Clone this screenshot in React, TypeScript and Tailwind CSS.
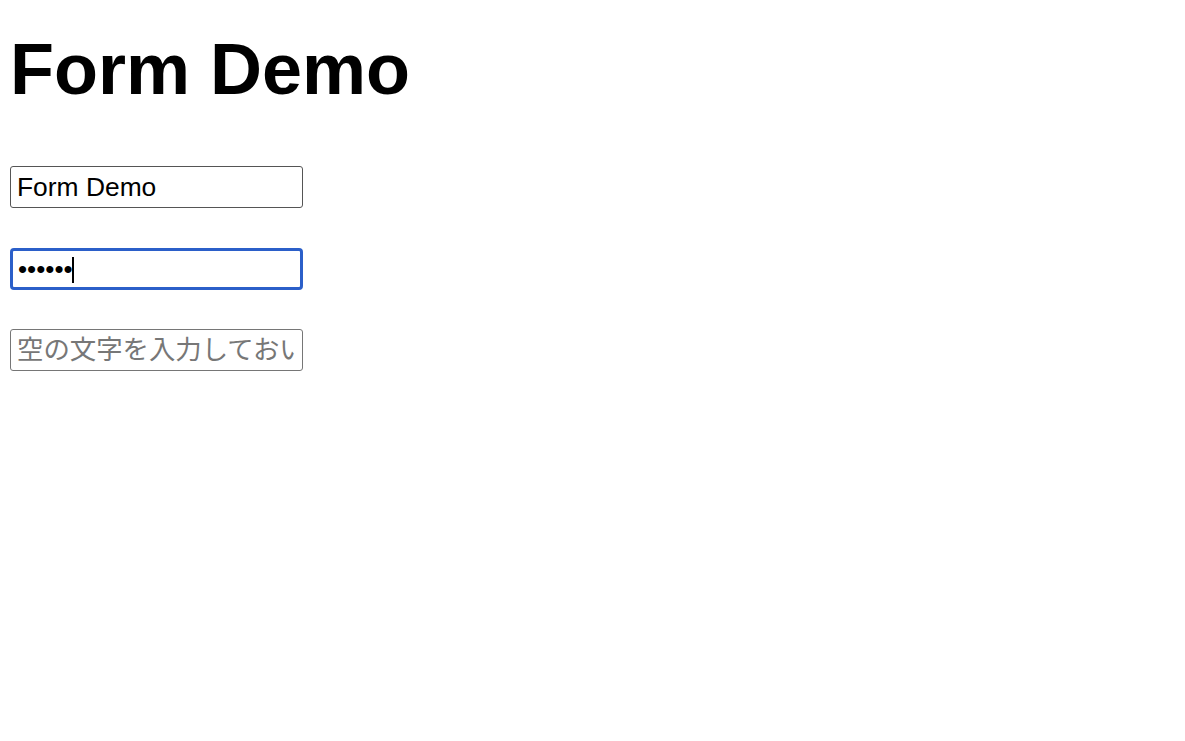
import { useState } from "react";

function App() {
  const [name, setName] = useState("Form Demo");
  const [password, setPassword] = useState("abcdef");
  const [memo, setMemo] = useState("");

  return (
    <div className="min-h-screen bg-white pl-[10px] pt-[28px] font-['Liberation_Sans','Noto_Sans_CJK_JP',sans-serif] text-black">
      <h1 className="text-[72px] font-bold leading-[83px]">Form Demo</h1>

      <div className="mt-[55px] flex flex-col gap-[40px]">
        <input
          type="text"
          value={name}
          onChange={(e) => setName(e.target.value)}
          className="h-[42px] w-[293px] rounded-[3px] border border-[#555555] bg-white px-[6px] text-[26.4px] text-black outline-none"
        />
        {/* focused field, caret drawn so it shows in the still */}
        <div className="relative w-[293px]">
          <input
            type="password"
            value={password}
            onChange={(e) => setPassword(e.target.value)}
            className="h-[42px] w-[293px] rounded-[4px] border-[3px] border-[#2b5fc9] bg-white px-[5px] text-[26px] text-black caret-transparent outline-none"
          />
          <span className="pointer-events-none absolute left-[62px] top-[9px] h-[26px] w-[2px] bg-black" />
        </div>
        <input
          type="text"
          value={memo}
          placeholder="空の文字を入力しておいてください"
          onChange={(e) => setMemo(e.target.value)}
          className="-mt-[1px] h-[42px] w-[293px] rounded-[3px] border border-[#767676] bg-white px-[6px] text-[26.4px] text-black outline-none placeholder:text-[#777777]"
        />
      </div>
    </div>
  );
}

export default App;
